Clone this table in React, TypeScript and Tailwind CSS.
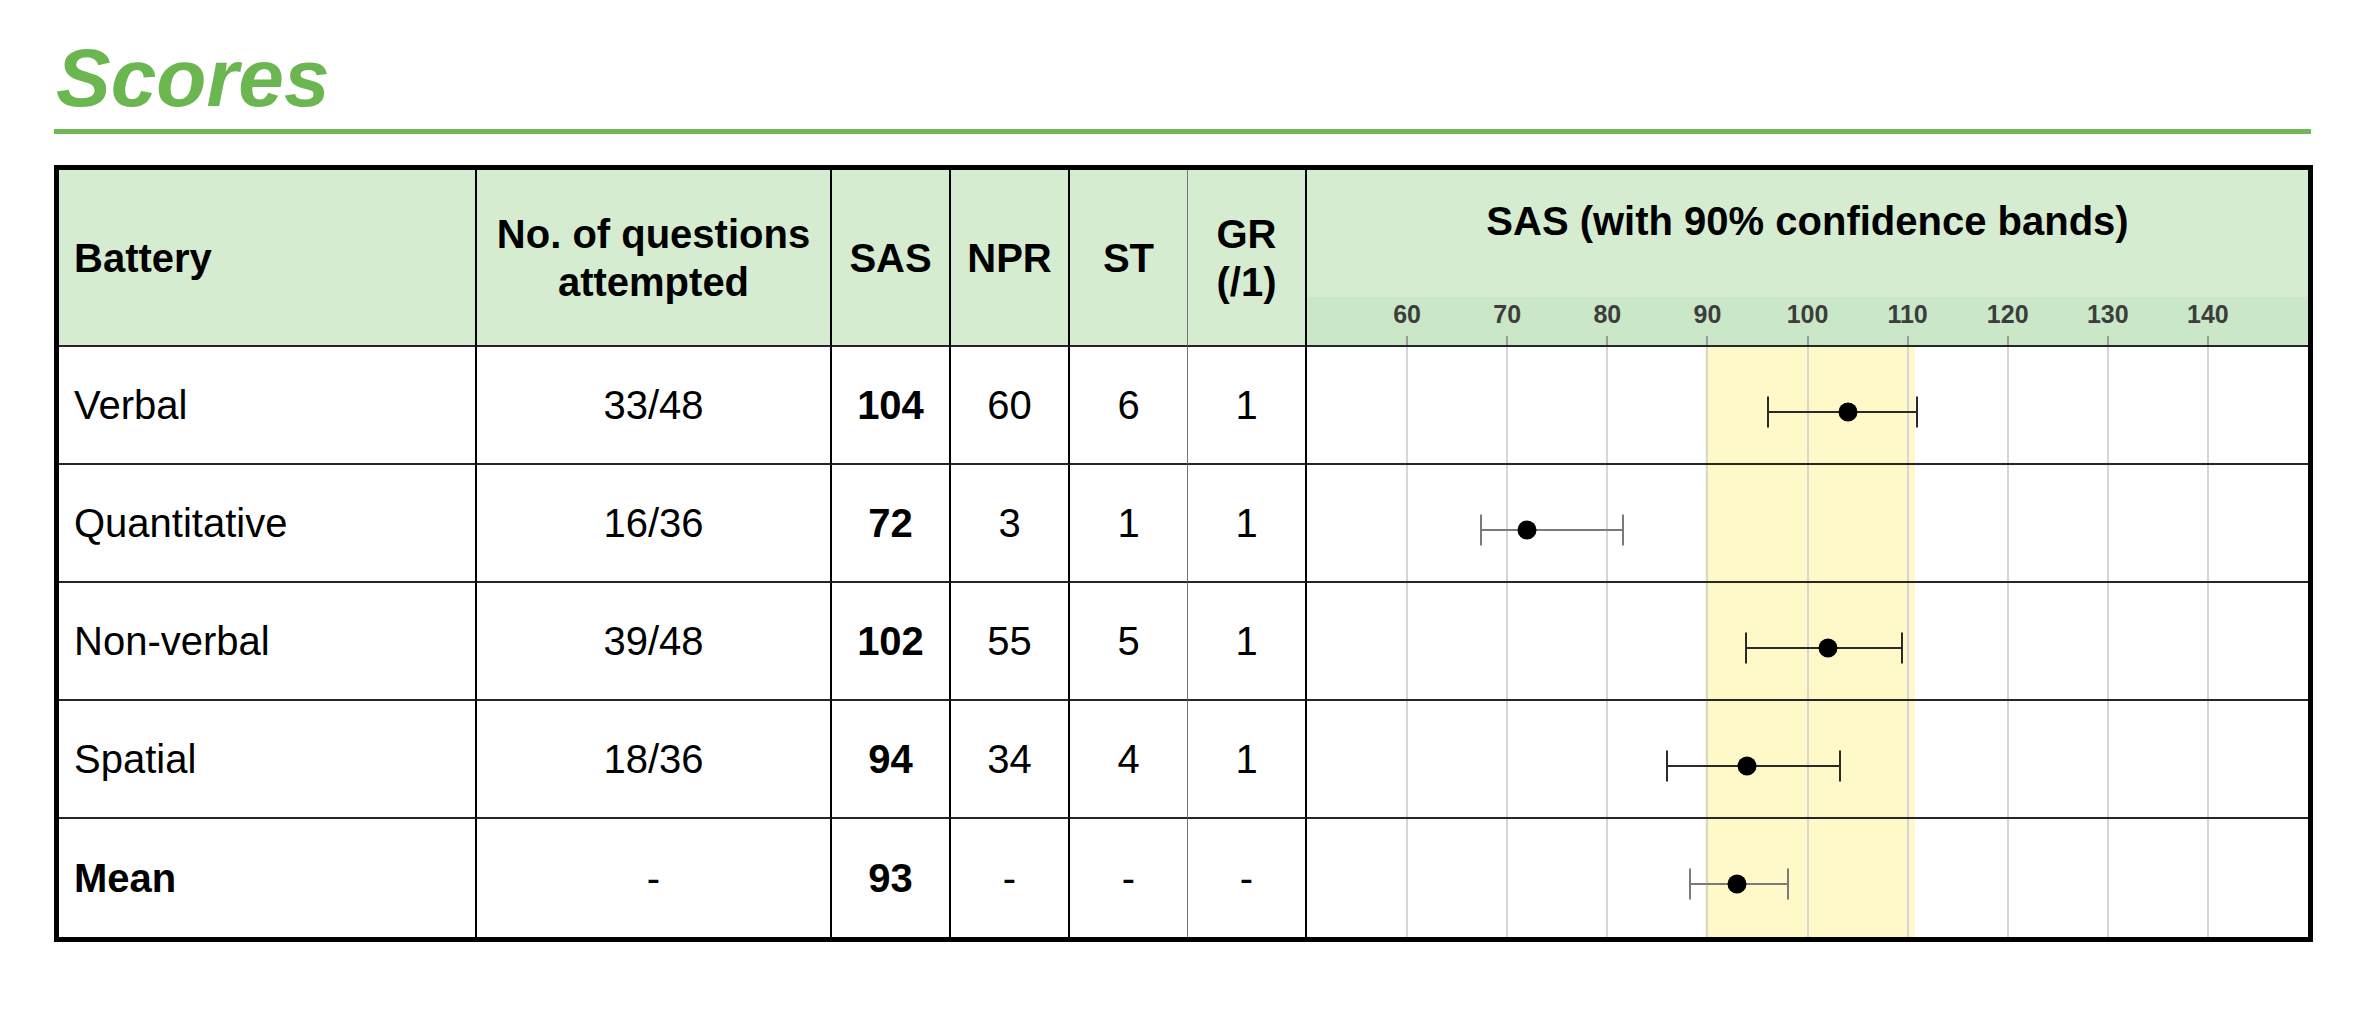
const TICKS = [60, 70, 80, 90, 100, 110, 120, 130, 140];

type Row = {
  name: string;
  attempted: string;
  sas: number;
  npr: string;
  st: string;
  gr: string;
  lo: number;
  hi: number;
  bold?: boolean;
  faint?: boolean;
};

const ROWS: Row[] = [
  { name: "Verbal", attempted: "33/48", sas: 104, npr: "60", st: "6", gr: "1", lo: 96.1, hi: 110.9 },
  { name: "Quantitative", attempted: "16/36", sas: 72, npr: "3", st: "1", gr: "1", lo: 67.4, hi: 81.6, faint: true },
  { name: "Non-verbal", attempted: "39/48", sas: 102, npr: "55", st: "5", gr: "1", lo: 93.9, hi: 109.4 },
  { name: "Spatial", attempted: "18/36", sas: 94, npr: "34", st: "4", gr: "1", lo: 86.0, hi: 103.2 },
  { name: "Mean", attempted: "-", sas: 93, npr: "-", st: "-", gr: "-", lo: 88.3, hi: 98.1, bold: true, faint: true },
];

// chart domain runs 50..150, so a value maps straight to a percentage
const pos = (v: number) => `${v - 50}%`;

function ChartCell({ row, last }: { row: Row; last: boolean }) {
  const line = row.faint ? "bg-[#7a7a7a]" : "bg-[#2a2a2a]";
  return (
    <div className={`relative overflow-hidden ${last ? "" : "border-b-2 border-[#262626]"}`}>
      <div
        className="absolute inset-y-0 bg-[#fff9c9]"
        style={{ left: pos(89.8), width: `${110.7 - 89.8}%` }}
      />
      {TICKS.map((t) => (
        <div
          key={t}
          className="absolute inset-y-0 w-[2px] -translate-x-1/2 bg-[#d6d6d6]"
          style={{ left: pos(t) }}
        />
      ))}
      <div
        className={`absolute top-[65px] h-[2px] -translate-y-1/2 ${line}`}
        style={{ left: pos(row.lo), width: `${row.hi - row.lo}%` }}
      />
      <div
        className={`absolute top-[65px] h-[31px] w-[2px] -translate-x-1/2 -translate-y-1/2 ${line}`}
        style={{ left: pos(row.lo) }}
      />
      <div
        className={`absolute top-[65px] h-[31px] w-[2px] -translate-x-1/2 -translate-y-1/2 ${line}`}
        style={{ left: pos(row.hi) }}
      />
      <div
        className="absolute top-[65px] h-[19px] w-[19px] -translate-x-1/2 -translate-y-1/2 rounded-full bg-black"
        style={{ left: pos(row.sas) }}
      />
    </div>
  );
}

export default function App() {
  const head = "flex items-center justify-center text-center font-bold border-b-2 border-[#262626] bg-[#d6ecd1]";
  return (
    <div className="min-h-screen bg-white font-['Liberation_Sans',Arial,sans-serif] text-black">
      <div className="px-[54px] pt-[37px]">
        <h1 className="pl-[2px] text-[82px] font-bold italic leading-[82px] text-[#6cb652]">Scores</h1>
        <div className="mt-[10px] h-[5px] w-[2257px] bg-[#6fb858]" />

        <div className="mt-[31px] grid w-[2259px] grid-cols-[418px_355px_119px_119px_118px_119px_1fr] grid-rows-[177px_repeat(5,118px)] border-[5px] border-black text-[40px] leading-[48px]">
          <div className={`${head} justify-start border-r-2 border-r-black pl-[15px]`}>Battery</div>
          <div className={`${head} border-r-2 border-r-black`}>
            No. of questions
            <br />
            attempted
          </div>
          <div className={`${head} border-r-2 border-r-black`}>SAS</div>
          <div className={`${head} border-r-2 border-r-black`}>NPR</div>
          <div className={`${head} border-r border-r-[#777]`}>ST</div>
          <div className={`${head} border-r-2 border-r-black`}>
            GR
            <br />
            (/1)
          </div>
          <div className="flex flex-col border-b-2 border-[#262626] bg-[#d6ecd1]">
            <div className="flex flex-1 justify-center pt-[27px] font-bold">SAS (with 90% confidence bands)</div>
            <div className="relative h-[48px] bg-[#cae7c8]">
              {TICKS.map((t) => (
                <span
                  key={t}
                  className="absolute top-[2px] -translate-x-1/2 text-[25px] font-bold leading-[30px] text-[#3d3d3d]"
                  style={{ left: pos(t) }}
                >
                  {t}
                </span>
              ))}
              {TICKS.map((t) => (
                <div
                  key={t}
                  className="absolute bottom-0 h-[9px] w-[2px] -translate-x-1/2 bg-[#9a9a9a]"
                  style={{ left: pos(t) }}
                />
              ))}
            </div>
          </div>

          {ROWS.map((r, i) => {
            const last = i === ROWS.length - 1;
            const rule = last ? "" : "border-b-2 border-b-[#262626]";
            const cell = `flex items-center justify-center ${rule}`;
            return [
              <div
                key={`${r.name}-n`}
                className={`flex items-center pl-[15px] border-r-2 border-r-black ${rule} ${r.bold ? "font-bold" : ""}`}
              >
                {r.name}
              </div>,
              <div key={`${r.name}-a`} className={`${cell} border-r-2 border-r-black`}>
                {r.attempted}
              </div>,
              <div key={`${r.name}-s`} className={`${cell} border-r-2 border-r-black font-bold`}>
                {r.sas}
              </div>,
              <div key={`${r.name}-p`} className={`${cell} border-r-2 border-r-black`}>
                {r.npr}
              </div>,
              <div key={`${r.name}-t`} className={`${cell} border-r border-r-[#777]`}>
                {r.st}
              </div>,
              <div key={`${r.name}-g`} className={`${cell} border-r-2 border-r-black`}>
                {r.gr}
              </div>,
              <ChartCell key={`${r.name}-c`} row={r} last={last} />,
            ];
          })}
        </div>
      </div>
    </div>
  );
}
